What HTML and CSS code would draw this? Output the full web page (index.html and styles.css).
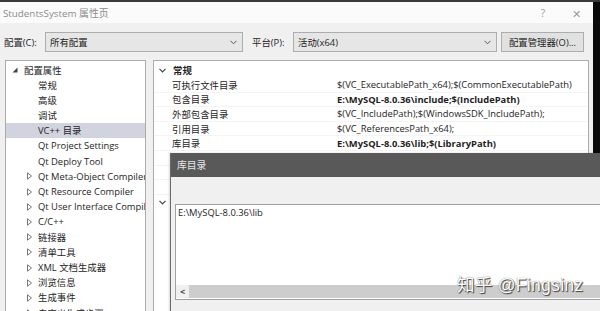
FILE: index.html
```html
<!DOCTYPE html>
<html>
<head>
<meta charset="utf-8">
<link rel="stylesheet" href="styles.css">
</head>
<body>
<div class="screen">
  <div class="window">
    <div class="titlebar">
      <span class="title">StudentsSystem 属性页</span>
      <span class="tb-btns"><span class="help">?</span><span class="close">✕</span></span>
    </div>
    <div class="toolbar">
      <span class="lbl">配置(C):</span>
      <div class="select sel-config"><span>所有配置</span><svg class="chev" width="7" height="5" viewBox="0 0 7 5"><path d="M0.5 0.8 L3.5 3.8 L6.5 0.8" fill="none" stroke="#555" stroke-width="1"/></svg></div>
      <span class="lbl lbl-plat">平台(P):</span>
      <div class="select sel-plat"><span>活动(x64)</span><svg class="chev" width="7" height="5" viewBox="0 0 7 5"><path d="M0.5 0.8 L3.5 3.8 L6.5 0.8" fill="none" stroke="#555" stroke-width="1"/></svg></div>
      <div class="btn">配置管理器(O)...</div>
    </div>
    <div class="main">
      <div class="tree">
        <div class="node root"><svg class="tri" width="6" height="6" viewBox="0 0 6 6"><path d="M5.5 0.5 L5.5 5.5 L0.5 5.5 Z" fill="#444"/></svg><span>配置属性</span></div>
        <div class="node leaf">常规</div>
        <div class="node leaf">高级</div>
        <div class="node leaf">调试</div>
        <div class="node leaf sel">VC++ 目录</div>
        <div class="node leaf">Qt Project Settings</div>
        <div class="node leaf">Qt Deploy Tool</div>
        <div class="node exp"><svg class="tri-o" width="5" height="8" viewBox="0 0 5 8"><path d="M0.5 0.8 L4.5 4 L0.5 7.2 Z" fill="none" stroke="#777" stroke-width="1"/></svg><span class="txt">Qt Meta-Object Compiler</span></div>
        <div class="node exp"><svg class="tri-o" width="5" height="8" viewBox="0 0 5 8"><path d="M0.5 0.8 L4.5 4 L0.5 7.2 Z" fill="none" stroke="#777" stroke-width="1"/></svg><span class="txt">Qt Resource Compiler</span></div>
        <div class="node exp"><svg class="tri-o" width="5" height="8" viewBox="0 0 5 8"><path d="M0.5 0.8 L4.5 4 L0.5 7.2 Z" fill="none" stroke="#777" stroke-width="1"/></svg><span class="txt">Qt User Interface Compiler</span></div>
        <div class="node exp"><svg class="tri-o" width="5" height="8" viewBox="0 0 5 8"><path d="M0.5 0.8 L4.5 4 L0.5 7.2 Z" fill="none" stroke="#777" stroke-width="1"/></svg><span class="txt">C/C++</span></div>
        <div class="node exp"><svg class="tri-o" width="5" height="8" viewBox="0 0 5 8"><path d="M0.5 0.8 L4.5 4 L0.5 7.2 Z" fill="none" stroke="#777" stroke-width="1"/></svg><span class="txt">链接器</span></div>
        <div class="node exp"><svg class="tri-o" width="5" height="8" viewBox="0 0 5 8"><path d="M0.5 0.8 L4.5 4 L0.5 7.2 Z" fill="none" stroke="#777" stroke-width="1"/></svg><span class="txt">清单工具</span></div>
        <div class="node exp"><svg class="tri-o" width="5" height="8" viewBox="0 0 5 8"><path d="M0.5 0.8 L4.5 4 L0.5 7.2 Z" fill="none" stroke="#777" stroke-width="1"/></svg><span class="txt">XML 文档生成器</span></div>
        <div class="node exp"><svg class="tri-o" width="5" height="8" viewBox="0 0 5 8"><path d="M0.5 0.8 L4.5 4 L0.5 7.2 Z" fill="none" stroke="#777" stroke-width="1"/></svg><span class="txt">浏览信息</span></div>
        <div class="node exp"><svg class="tri-o" width="5" height="8" viewBox="0 0 5 8"><path d="M0.5 0.8 L4.5 4 L0.5 7.2 Z" fill="none" stroke="#777" stroke-width="1"/></svg><span class="txt">生成事件</span></div>
        <div class="node exp"><svg class="tri-o" width="5" height="8" viewBox="0 0 5 8"><path d="M0.5 0.8 L4.5 4 L0.5 7.2 Z" fill="none" stroke="#777" stroke-width="1"/></svg><span class="txt">自定义生成步骤</span></div>
      </div>
      <div class="grid">
        <div class="cat"><svg class="gchev" width="7" height="5" viewBox="0 0 7 5"><path d="M0.5 0.8 L3.5 3.8 L6.5 0.8" fill="none" stroke="#444" stroke-width="1.2"/></svg><span>常规</span></div>
        <div class="prop"><span class="pn">可执行文件目录</span><span class="pv">$(VC_ExecutablePath_x64);$(CommonExecutablePath)</span></div>
        <div class="prop"><span class="pn">包含目录</span><span class="pv b">E:\MySQL-8.0.36\include;$(IncludePath)</span></div>
        <div class="prop"><span class="pn">外部包含目录</span><span class="pv">$(VC_IncludePath);$(WindowsSDK_IncludePath);</span></div>
        <div class="prop"><span class="pn">引用目录</span><span class="pv">$(VC_ReferencesPath_x64);</span></div>
        <div class="prop"><span class="pn">库目录</span><span class="pv b">E:\MySQL-8.0.36\lib;$(LibraryPath)</span></div>
        <div class="prop"><span class="pn">库 WinRT 目录</span><span class="pv">$(WindowsSDK_MetadataPath);</span></div>
        <div class="prop"><span class="pn">源目录</span><span class="pv">$(VC_SourcePath);</span></div>
        <div class="prop"><span class="pn">排除目录</span><span class="pv">$(CommonExcludePath);</span></div>
        <div class="cat"><svg class="gchev" width="7" height="5" viewBox="0 0 7 5"><path d="M0.5 0.8 L3.5 3.8 L6.5 0.8" fill="none" stroke="#444" stroke-width="1.2"/></svg><span>公共</span></div>
      </div>
    </div>
  </div>
  <div class="edge"></div>
</div>

<div class="dialog">
  <div class="dlg-title">库目录</div>
  <div class="dlg-body">
    <div class="editbox">
      <div class="edit-text">E:\MySQL-8.0.36\lib</div>
      <div class="hscroll"><span class="arrow">&lt;</span><span class="thumb"></span></div>
    </div>
  </div>
</div>

<div class="watermark"><span class="zh">知乎</span> @Fingsinz</div>
</body>
</html>
```

FILE: styles.css
```css
* { box-sizing: border-box; }
html, body { margin: 0; padding: 0; }
body {
  width: 600px;
  height: 311px;
  overflow: hidden;
  position: relative;
  background: #000;
  font-family: "Segoe UI", "Open Sans", "Noto Sans CJK SC", sans-serif;
  font-size: 9.4px;
  color: #1e1e1e;
}
.screen {
  display: flex;
  height: 311px;
  border-top: 2px solid #3a3a3a;
}
.window {
  width: 593px;
  display: flex;
  flex-direction: column;
  background: #f0f0f0;
  overflow: hidden;
}
.edge { flex: 1; background: #0a0a0a; }

.titlebar {
  flex: none;
  height: 21px;
  background: #fbfbfb;
  display: flex;
  align-items: center;
  justify-content: space-between;
  padding: 1px 0 0 3px;
}
.title { color: #8c8c8c; font-size: 9.8px; }
.tb-btns { display: flex; align-items: center; color: #9a9a9a; }
.help { font-size: 10px; margin-right: 27px; }
.close { font-size: 11px; margin-right: 12px; }

.toolbar {
  flex: none;
  height: 37px;
  display: flex;
  align-items: center;
  padding-left: 4px;
  padding-top: 1px;
}
.lbl { width: 41px; }
.lbl-plat { width: 41px; margin-left: 9px; }
.select {
  height: 20px;
  border: 1px solid #adadad;
  background: #e6e6e6;
  display: flex;
  align-items: center;
  justify-content: space-between;
  padding: 0 5px 0 4px;
}
.sel-config { width: 198px; }
.sel-plat { width: 204px; }
.btn {
  margin-left: 4px;
  width: 83px;
  height: 20px;
  border: 1px solid #adadad;
  background: #e1e1e1;
  display: flex;
  align-items: center;
  justify-content: center;
}

.main {
  flex: 1;
  min-height: 0;
  display: flex;
  gap: 7px;
  padding-left: 5px;
  padding-right: 4px;
}
.tree {
  flex: none;
  width: 141px;
  background: #fff;
  border: 1px solid #acacac;
  border-bottom: none;
  padding-top: 1.5px;
  overflow: hidden;
}
.node {
  flex: none;
  height: 15.2px;
  line-height: 15.2px;
  white-space: nowrap;
  display: flex;
  align-items: center;
  overflow: hidden;
}
.node svg { flex: none; }
.txt { overflow: hidden; }
.root { padding-left: 6px; }
.root .tri { margin-right: 6px; }
.leaf { padding-left: 32px; }
.exp { padding-left: 21px; }
.exp .tri-o { margin-right: 6px; }
.sel { background: #d1d4df; }

.grid {
  flex: 1;
  background: #fff;
  border: 1px solid #acacac;
  border-bottom: none;
  padding-top: 1px;
  overflow: hidden;
}
.cat {
  height: 16px;
  display: flex;
  align-items: center;
  font-weight: bold;
  padding-left: 5px;
}
.gchev { margin-right: 7px; flex: none; }
.prop {
  height: 14.6px;
  display: flex;
  align-items: center;
  white-space: nowrap;
  border-bottom: 1px solid #f4f4f4;
}
.pn { width: 183px; padding-left: 18px; flex: none; }
.pv { overflow: hidden; }
.b { font-weight: bold; }

.dialog {
  position: absolute;
  left: 170px;
  top: 153px;
  right: -10px;
  bottom: -20px;
  display: flex;
  flex-direction: column;
  border-left: 1px solid #6a6a6a;
  box-shadow: -1px 0 2px rgba(0,0,0,0.15);
}
.dlg-title {
  flex: none;
  height: 24px;
  background: #595959;
  color: #e6e6e6;
  display: flex;
  align-items: center;
  padding-left: 6px;
  font-size: 9.8px;
}
.dlg-body {
  flex: 1;
  background: #f0f0f0;
  padding: 27px 0 0 4px;
}
.editbox {
  height: 96px;
  border: 1px solid #a0a0a0;
  background: #fff;
  display: flex;
  flex-direction: column;
}
.edit-text {
  flex: 1;
  padding: 2px 0 0 2px;
  line-height: 12px;
}
.hscroll {
  flex: none;
  height: 13px;
  margin-bottom: 1px;
  display: flex;
  align-items: center;
  background: #cdcdcd;
}
.arrow {
  width: 13px;
  height: 13px;
  background: #f0f0f0;
  display: flex;
  align-items: center;
  justify-content: center;
  font-size: 9px;
  font-weight: bold;
  color: #444;
}
.thumb { flex: 1; height: 13px; background: #cdcdcd; }

.watermark {
  position: absolute;
  left: 457px;
  top: 271px;
  font-family: "Liberation Sans", "Noto Sans CJK SC", sans-serif;
  font-size: 17.5px;
  color: #fff;
  text-shadow: 1px 1px 1px #3c3c3c, 0 0 1px #555;
  white-space: nowrap;
  letter-spacing: 0.3px;
}
.zh { font-family: "Noto Sans CJK SC", sans-serif; }
```
